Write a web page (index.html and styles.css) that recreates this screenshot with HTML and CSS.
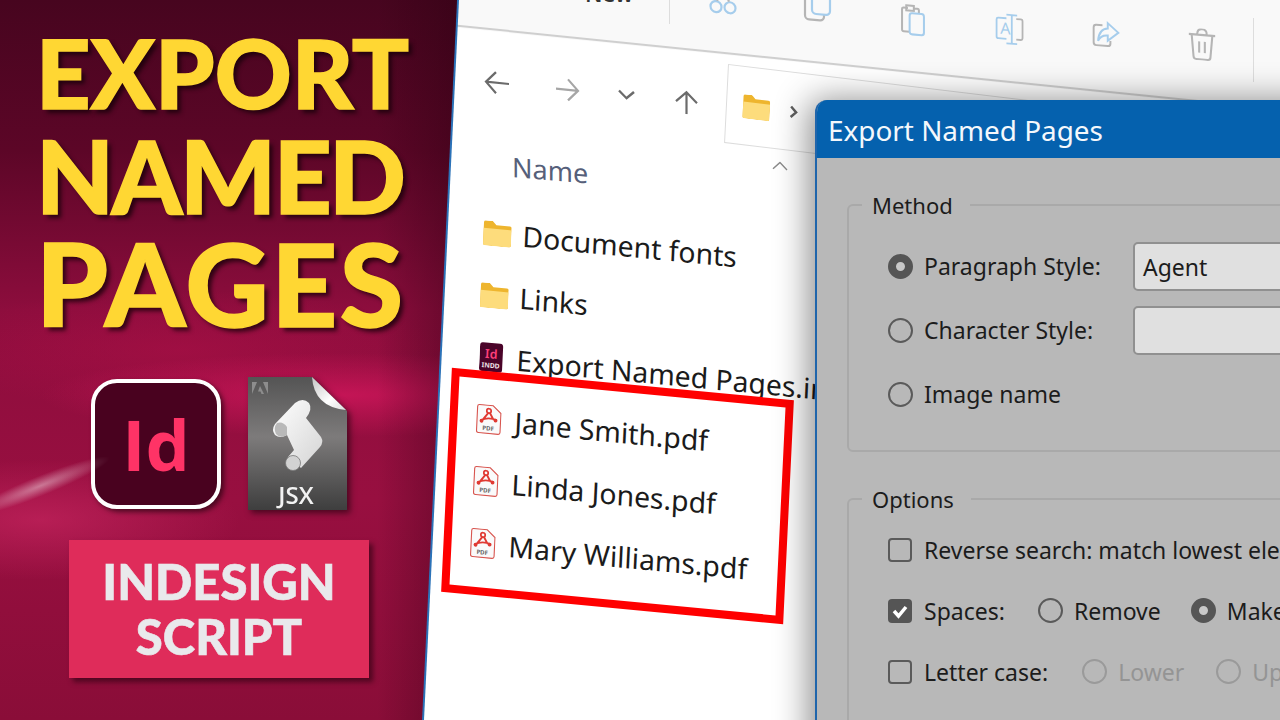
FILE: index.html
```html
<!DOCTYPE html>
<html lang="en">
<head>
    <meta charset="UTF-8">
    <title>Export Named Pages - InDesign Script</title>
    <link rel="stylesheet" href="styles.css">
</head>
<body>
    <svg class="defs" width="0" height="0">
        <symbol id="folder" viewBox="0 0 30 26">
            <path d="M1 2 Q1 0 3 0 H10 L14 4 H28 Q30 4 30 6 V24 Q30 26 28 26 H3 Q1 26 1 24 Z" fill="#eeb52e"/>
            <path d="M1 8 H30 V24 Q30 26 28 26 H3 Q1 26 1 24 Z" fill="#fddc7c"/>
        </symbol>
        <symbol id="pdf" viewBox="0 0 26 30">
            <path d="M1.5 3 Q1.5 1 3.500 1 H17 L25 8 V27 Q25 29 23 29 H3.500 Q1.500 29 1.500 27 Z" fill="#fafafa" stroke="#d8554f" stroke-width="1.100"/>
            <circle cx="13" cy="6.500" r="2.200" fill="none" stroke="#e03a33" stroke-width="1.700"/>
            <path d="M12.500 8.500 L7 16 M14 8.500 L18 15 M5 17 Q12 12 21 15" fill="none" stroke="#e03a33" stroke-width="1.900"/>
            <circle cx="6" cy="17" r="1.900" fill="#e03a33"/>
            <circle cx="20" cy="15.500" r="1.900" fill="#e03a33"/>
            <text x="13" y="26" class="pdf-tag">PDF</text>
        </symbol>
    </svg>

    <div class="stage">
        <!-- explorer window -->
        <div class="ribbon"></div>
        <span class="ribbon-scrap">New</span>
        <i class="ribbon-sep sep-one"></i>
        <i class="ribbon-sep sep-two"></i>
        <div class="ribbon-icons">
            <svg class="icon-cut" width="28" height="22" viewBox="0 0 28 22" fill="none" stroke-width="2.200">
                <circle cx="7" cy="14" r="5.500" stroke="#a6cdec"/>
                <circle cx="21" cy="14" r="5.500" stroke="#a6cdec"/>
                <path d="M8 8 L13 -4 M20 8 L15 -4" stroke="#b5b5b5"/>
            </svg>
            <svg class="icon-copy" width="30" height="36" viewBox="0 0 30 36" fill="none" stroke-width="2.200">
                <rect x="2" y="6" width="19" height="27" rx="4" stroke="#b5b5b5"/>
                <rect x="9" y="1" width="18" height="26" rx="4" fill="#f9f9f9" stroke="#a6cdec"/>
            </svg>
            <svg width="30" height="32" viewBox="0 0 30 38" fill="none" stroke-width="2.400">
                <path d="M9 5 H4 Q2 5 2 7 V31 Q2 33 4 33 H11" stroke="#b5b5b5"/>
                <path d="M7 2 H16 V8 H7 Z M16 5 H20 Q22 5 22 7 V10" stroke="#b5b5b5"/>
                <rect x="11" y="11" width="17" height="25" rx="3" stroke="#a6cdec"/>
            </svg>
            <svg width="32" height="34" viewBox="0 0 34 38" fill="none" stroke-width="2">
                <path d="M13 7 H4 Q2 7 2 9 V28 Q2 30 4 30 H13" stroke="#a6cdec"/>
                <path d="M24 7 H29 Q31 7 31 9 V28 Q31 30 29 30 H24" stroke="#b5b5b5"/>
                <path d="M13 3 H25 M13 35 H25 M19 3 V35" stroke="#a6cdec"/>
                <text x="6" y="25" class="rename-a">A</text>
            </svg>
            <svg width="30" height="30" viewBox="0 0 32 34" fill="none" stroke-width="2.200">
                <path d="M12 6 H5 Q2 6 2 9 V26 Q2 29 5 29 H18 Q21 29 21 26 V23" stroke="#b5b5b5"/>
                <path d="M18 3 L30 13 L18 23 V17 Q10 17 7 24 Q8 10 18 9 Z" stroke="#a6cdec"/>
            </svg>
            <svg width="30" height="32" viewBox="0 0 30 34" fill="none" stroke-width="2.200" stroke="#b5b5b5">
                <path d="M1 7 H29 M10 6 Q10 1 15 1 Q20 1 20 6"/>
                <path d="M4 7 L6 30 Q6 33 9 33 H21 Q24 33 24 30 L26 7"/>
                <path d="M12 14 V26 M18 14 V26"/>
            </svg>
        </div>

        <div class="nav-row">
            <svg width="26" height="23" viewBox="0 0 26 23" fill="none" stroke="#6b6b6b" stroke-width="2.200"><path d="M25 11.500 H2 M12 1 L2 11.500 L12 22"/></svg>
            <svg class="nav-forward" width="25" height="23" viewBox="0 0 25 23" fill="none" stroke="#a6a6a6" stroke-width="2.200"><path d="M1 11.500 H23 M13 1 L23 11.500 L13 22"/></svg>
            <svg class="nav-chevron" width="19" height="11" viewBox="0 0 19 11" fill="none" stroke="#6b6b6b" stroke-width="2.400"><path d="M2 2 L9.500 9 L17 2"/></svg>
            <svg class="nav-up" width="25" height="24" viewBox="0 0 25 24" fill="none" stroke="#6b6b6b" stroke-width="2.200"><path d="M12.500 24 V2 M2 12 L12.500 2 L23 12"/></svg>
        </div>
        <div class="crumb">
            <svg class="crumb-folder" width="28" height="24"><use href="#folder"/></svg>
            <svg width="9" height="14" viewBox="0 0 10 16" fill="none" stroke="#5f5f5f" stroke-width="2.800"><path d="M2 2 L8 8 L2 14"/></svg>
        </div>

        <div class="col-head">
            <span class="col-name">Name</span>
            <svg class="sort-caret" width="16" height="9" viewBox="0 0 16 9" fill="none" stroke="#8a8a8a" stroke-width="1.400"><path d="M1 8 L8 1 L15 8"/></svg>
        </div>

        <ul class="file-list">
            <li class="file"><svg class="file-icon" width="29" height="25"><use href="#folder"/></svg>Document fonts</li>
            <li class="file"><svg class="file-icon" width="29" height="25"><use href="#folder"/></svg>Links</li>
            <li class="file">
                <svg class="file-icon icon-indd" width="24" height="30" viewBox="0 0 25 30">
                    <rect width="24" height="30" rx="3" fill="#4a0429"/>
                    <text x="12" y="16" class="indd-id">Id</text>
                    <text x="12" y="26" class="indd-tag">INDD</text>
                </svg>Export Named Pages.indd
            </li>
            <li class="file"><svg class="file-icon icon-pdf" width="26" height="30"><use href="#pdf"/></svg>Jane Smith.pdf</li>
            <li class="file"><svg class="file-icon icon-pdf" width="26" height="30"><use href="#pdf"/></svg>Linda Jones.pdf</li>
            <li class="file"><svg class="file-icon icon-pdf" width="26" height="30"><use href="#pdf"/></svg>Mary Williams.pdf</li>
            <li class="red-box"></li>
        </ul>

        <!-- left title panel -->
        <div class="panel-edge"></div>
        <div class="panel">
            <h1 class="title">
                <span class="title-export">EXPORT</span>
                <span class="title-named">NAMED</span>
                <span class="title-pages">PAGES</span>
            </h1>
            <div class="logos">
                <div class="id-logo">Id</div>
                <svg class="jsx-logo" width="100" height="134" viewBox="0 0 100 134">
                    <defs>
                        <linearGradient id="jsxbody" x1="0" y1="0" x2="0" y2="1">
                            <stop offset="0" stop-color="#545454"/>
                            <stop offset="0.45" stop-color="#7d7b7b"/>
                            <stop offset="1" stop-color="#3e3e3e"/>
                        </linearGradient>
                        <linearGradient id="jsxfold" x1="0" y1="0" x2="1" y2="1">
                            <stop offset="0" stop-color="#c4c4c4"/>
                            <stop offset="0.6" stop-color="#ffffff"/>
                            <stop offset="1" stop-color="#dcdcdc"/>
                        </linearGradient>
                        <linearGradient id="jsxscroll" x1="0" y1="0" x2="1" y2="1">
                            <stop offset="0" stop-color="#ffffff"/>
                            <stop offset="1" stop-color="#d4d4d4"/>
                        </linearGradient>
                    </defs>
                    <path d="M0 0 H64 L99 34 V133 H0 Z" fill="url(#jsxbody)"/>
                    <path d="M64 0 Q66 30 98 33 Z" fill="url(#jsxfold)"/>
                    <path d="M4 5 H9 L4 17 Z M15 5 H20 V17 Z M12 9 L16 17 H13.500 L12.500 14.500 H10 Z" fill="#8d8d8d"/>
                    <path d="M27 47 L47 26 Q55 20 61 26 Q65 32 58 41 L73 60 Q76 65 72 70 L53 91 L40 80 L46 73 L39 58 Q32 62 27 58 Q23 53 27 47 Z" fill="url(#jsxscroll)"/>
                    <path d="M29 46 Q35 44 39 50 L39 58 Q32 62 28 57 Q25 51 29 46 Z" fill="#b9b9b9"/>
                    <circle cx="45" cy="86" r="7.500" fill="#d2d2d2" stroke="#777" stroke-width="0.800"/>
                    <text x="48" y="127" class="jsx-label">JSX</text>
                </svg>
            </div>
            <div class="script-tag">
                <span>INDESIGN</span>
                <span>SCRIPT</span>
            </div>
        </div>

        <!-- dialog on top -->
        <section class="dialog">
            <header class="dialog-head">Export Named Pages</header>
            <div class="dialog-body">
                <fieldset class="group group-method">
                    <legend>Method</legend>
                    <div class="row">
                        <i class="radio radio-on"></i><span class="row-label label-wide">Paragraph Style:</span>
                        <span class="field">Agent</span>
                    </div>
                    <div class="row">
                        <i class="radio"></i><span class="row-label label-wide">Character Style:</span>
                        <span class="field"></span>
                    </div>
                    <div class="row">
                        <i class="radio"></i><span class="row-label">Image name</span>
                    </div>
                </fieldset>
                <fieldset class="group group-options">
                    <legend>Options</legend>
                    <div class="row">
                        <i class="check"></i><span class="row-label">Reverse search: match lowest element</span>
                    </div>
                    <div class="row">
                        <i class="check check-on"><svg width="24" height="24" viewBox="0 0 24 24" fill="none" stroke="#fff" stroke-width="3.500"><path d="M6 12 L10.500 17 L18 8"/></svg></i>
                        <span class="row-label">Spaces:</span>
                        <i class="radio opt-remove"></i><span class="row-label">Remove</span>
                        <i class="radio radio-on opt-make"></i><span class="row-label">Make hyphens</span>
                    </div>
                    <div class="row">
                        <i class="check"></i><span class="row-label">Letter case:</span>
                        <i class="radio radio-off opt-lower"></i><span class="row-label label-off">Lower</span>
                        <i class="radio radio-off opt-upper"></i><span class="row-label label-off">Upper</span>
                    </div>
                </fieldset>
            </div>
        </section>
    </div>
</body>
</html>
```

FILE: styles.css
```css
* {
    box-sizing: border-box;
}

body {
    margin: 0;
    background: #fff;
    font-family: "Noto Sans", "Open Sans", sans-serif;
}

.defs {
    position: absolute;
}

.stage {
    position: relative;
    width: 1280px;
    height: 720px;
    overflow: hidden;
    background: #fff;
}

/* left panel */
.panel-edge {
    position: absolute;
    inset: 0;
    background: #2b72b8;
    clip-path: polygon(0 0, 459px 0, 424px 720px, 0 720px);
}

.panel {
    position: absolute;
    inset: 0 auto 0 0;
    width: 460px;
    padding: 21px 0 0 36px;
    clip-path: polygon(0 0, 457px 0, 422px 720px, 0 720px);
    background:
        linear-gradient(to right, transparent 82%, rgba(40, 0, 15, 0.4)),
        radial-gradient(ellipse 300px 42px at 340px 395px, rgba(205, 22, 90, 0.85), transparent),
        radial-gradient(ellipse 200px 60px at 40px 520px, rgba(205, 40, 100, 0.6), transparent),
        radial-gradient(ellipse 260px 60px at 180px 350px, rgba(170, 15, 70, 0.6), transparent),
        linear-gradient(to bottom, #47051f 0, #5c0627 150px, #8d0d3d 310px, #980f40 500px, #8a0d38 720px);
}

/* the light streak on the left */
.panel::before {
    content: "";
    position: absolute;
    left: -35px;
    top: 476px;
    width: 150px;
    height: 20px;
    background: radial-gradient(ellipse closest-side, rgba(255, 255, 255, 0.42), transparent);
    transform: rotate(-22deg);
}

.title {
    margin: 0;
    font-family: Lato, sans-serif;
    font-weight: 900;
    color: #ffd733;
    -webkit-text-stroke: 1.5px #ffd733;
    text-shadow: 4px 4px 4px rgba(20, 0, 8, 0.75);
}

.title span {
    display: block;
    white-space: nowrap;
}

.title-export {
    font-size: 95px;
    line-height: 102px;
}

.title-named {
    font-size: 101px;
    line-height: 105px;
    letter-spacing: -2.500px;
}

.title-pages {
    font-size: 115px;
    line-height: 108px;
    letter-spacing: 2.500px;
}

.logos {
    display: flex;
    align-items: flex-start;
    gap: 27px;
    margin: 41px 0 0 55px;
}

.id-logo {
    width: 130px;
    height: 130px;
    margin-top: 2px;
    border: 4px solid #fff;
    border-radius: 26px;
    background: #49021f;
    color: #ff3366;
    font-family: "Open Sans", sans-serif;
    font-weight: 700;
    font-size: 70px;
    line-height: 122px;
    text-align: center;
    box-shadow: 3px 3px 5px rgba(20, 0, 8, 0.6);
}

.jsx-logo {
    filter: drop-shadow(3px 3px 3px rgba(20, 0, 8, 0.6));
}

.jsx-label {
    font-family: "Open Sans", sans-serif;
    font-weight: 600;
    font-size: 24px;
    fill: #f2f2f2;
    text-anchor: middle;
}

.script-tag {
    display: flex;
    flex-direction: column;
    align-items: center;
    width: 300px;
    height: 138px;
    margin: 29px 0 0 33px;
    padding-top: 14px;
    background: #df2c5a;
    color: #e9e9ec;
    -webkit-text-stroke: 0.6px #e9e9ec;
    font-family: Lato, sans-serif;
    font-weight: 900;
    font-size: 49px;
    line-height: 55px;
    box-shadow: 4px 4px 5px rgba(40, 0, 15, 0.6);
}

/* explorer window */
.ribbon {
    position: absolute;
    inset: 0;
    background: #f9f9f9;
    clip-path: polygon(440px 0, 1280px 0, 1280px 111px, 440px 26px);
}

.ribbon::after {
    content: "";
    position: absolute;
    left: 440px;
    top: 23px;
    width: 860px;
    height: 2px;
    background: #cfcfcf;
    transform-origin: 0 0;
    transform: rotate(5.800deg);
}

.ribbon-scrap {
    position: absolute;
    left: 585px;
    top: -22px;
    font-size: 22px;
    font-weight: 600;
    color: #333;
}

.ribbon-sep {
    position: absolute;
    width: 1px;
    background: #ddd;
}

.sep-one {
    left: 669px;
    top: 0;
    height: 24px;
}

.sep-two {
    left: 1253px;
    top: 18px;
    height: 64px;
}

.ribbon-icons {
    position: absolute;
    left: 709px;
    top: -13px;
    display: flex;
    align-items: flex-start;
    gap: 65.500px;
    transform-origin: 0 0;
    transform: skewY(4.800deg);
}

.icon-cut {
    margin-top: 5px;
}

.icon-copy {
    margin-top: -9px;
}

.nav-row {
    position: absolute;
    left: 484px;
    top: 70px;
    display: flex;
    align-items: flex-start;
    gap: 45px;
    transform-origin: 0 0;
    transform: skewY(5.700deg);
}

.nav-forward {
    margin-right: -8px;
}

.nav-chevron {
    margin-top: 5px;
    margin-right: -7px;
}

.crumb {
    position: absolute;
    left: 728px;
    top: 64px;
    width: 320px;
    height: 79px;
    display: flex;
    align-items: center;
    gap: 19px;
    padding-left: 15px;
    border: 1px solid #ddd;
    background: #fff;
    transform-origin: 0 0;
    transform: matrix(1, 0.12, -0.05, 1, 0, 0);
}

.crumb-folder {
    flex: none;
}

.col-head {
    position: absolute;
    left: 512px;
    top: 148px;
    width: 276px;
    display: flex;
    justify-content: space-between;
    align-items: center;
    transform-origin: 0 0;
    transform: skewY(5deg);
}

.col-name {
    font-size: 27px;
    color: #56607a;
}

.sort-caret {
    align-self: flex-start;
    margin-top: -10px;
}

.file-list {
    position: absolute;
    left: 484px;
    top: 201px;
    width: 340px;
    margin: 0;
    padding: 0;
    list-style: none;
    transform-origin: 0 0;
    transform: matrix(1, 0.095, -0.048, 1, 0, 0);
}

.file {
    display: flex;
    align-items: center;
    height: 62px;
    font-size: 28.300px;
    color: #1b1b1b;
    white-space: nowrap;
}

.file-icon {
    flex: none;
    margin-right: 11px;
}

.icon-indd {
    margin-left: 3px;
    margin-right: 13px;
}

.icon-pdf {
    margin-left: 2px;
    margin-right: 13px;
}

.pdf-tag {
    font-family: "Noto Sans", sans-serif;
    font-size: 6px;
    font-weight: 700;
    fill: #666;
    text-anchor: middle;
}

.rename-a {
    font-family: "Noto Sans", sans-serif;
    font-size: 18px;
    fill: #a6cdec;
    stroke: none;
}

.indd-id {
    font-family: "Noto Sans", sans-serif;
    font-size: 13px;
    font-weight: 600;
    fill: #ff3f7a;
    text-anchor: middle;
}

.indd-tag {
    font-family: "Noto Sans", sans-serif;
    font-size: 7px;
    font-weight: 700;
    fill: #f2e6ec;
    text-anchor: middle;
}

.red-box {
    position: absolute;
    left: -24px;
    top: 169px;
    width: 342px;
    height: 224px;
    border: 8px solid #f00;
}

/* dialog */
.dialog {
    position: absolute;
    left: 815px;
    top: 100px;
    width: 520px;
    height: 660px;
    border-radius: 12px 0 0 0;
    background: #b8b8b8;
    border-left: 2px solid #1f65ab;
    box-shadow: -6px 0 34px rgba(0, 0, 0, 0.45);
    overflow: hidden;
}

.dialog-head {
    height: 58px;
    padding: 11px 0 0 13px;
    margin-left: -2px;
    background: #0561ae;
    color: #f4f8fc;
    font-size: 27.900px;
    line-height: 38px;
}

.dialog-body {
    padding: 32px 0 0 30px;
}

.group {
    width: 560px;
    margin: 0;
    padding: 0 0 0 39px;
    border: 2px solid #a9a9a9;
    border-radius: 6px;
}

.group legend {
    margin-left: -26px;
    padding: 0 17px 0 10px;
    font-size: 22px;
    line-height: 30px;
    color: #1c1c1c;
}

.group-method {
    height: 262px;
    padding-top: 14px;
}

.group-options {
    height: 300px;
    margin-top: 32px;
    padding-top: 5px;
}

.row {
    display: flex;
    align-items: center;
    height: 64px;
    white-space: nowrap;
}

.group-options .row {
    height: 61px;
}

.row-label {
    font-size: 23px;
    color: #1c1c1c;
}

.label-wide {
    width: 209px;
}

.label-off {
    color: #949494;
}

.radio {
    flex: none;
    width: 25px;
    height: 25px;
    margin-right: 11px;
    border: 2px solid #5a5a5a;
    border-radius: 50%;
}

.radio-on {
    border: 8px solid #555;
    background: #c8c8c8;
}

.radio-off {
    border-color: #9a9a9a;
}

.opt-remove {
    margin-left: 33px;
}

.opt-make {
    margin-left: 30px;
}

.opt-lower {
    margin-left: 34px;
}

.opt-upper {
    margin-left: 32px;
}

.check {
    flex: none;
    width: 24px;
    height: 24px;
    margin-right: 12px;
    border: 2px solid #5a5a5a;
    border-radius: 4px;
}

.check-on {
    border: 0;
    background: #555;
}

.check-on svg {
    display: block;
}

.field {
    flex: none;
    width: 200px;
    height: 49px;
    padding-left: 8px;
    border: 2px solid #909090;
    border-radius: 5px;
    background: #e0e0e0;
    font-size: 23px;
    line-height: 47px;
    color: #1c1c1c;
}
```
